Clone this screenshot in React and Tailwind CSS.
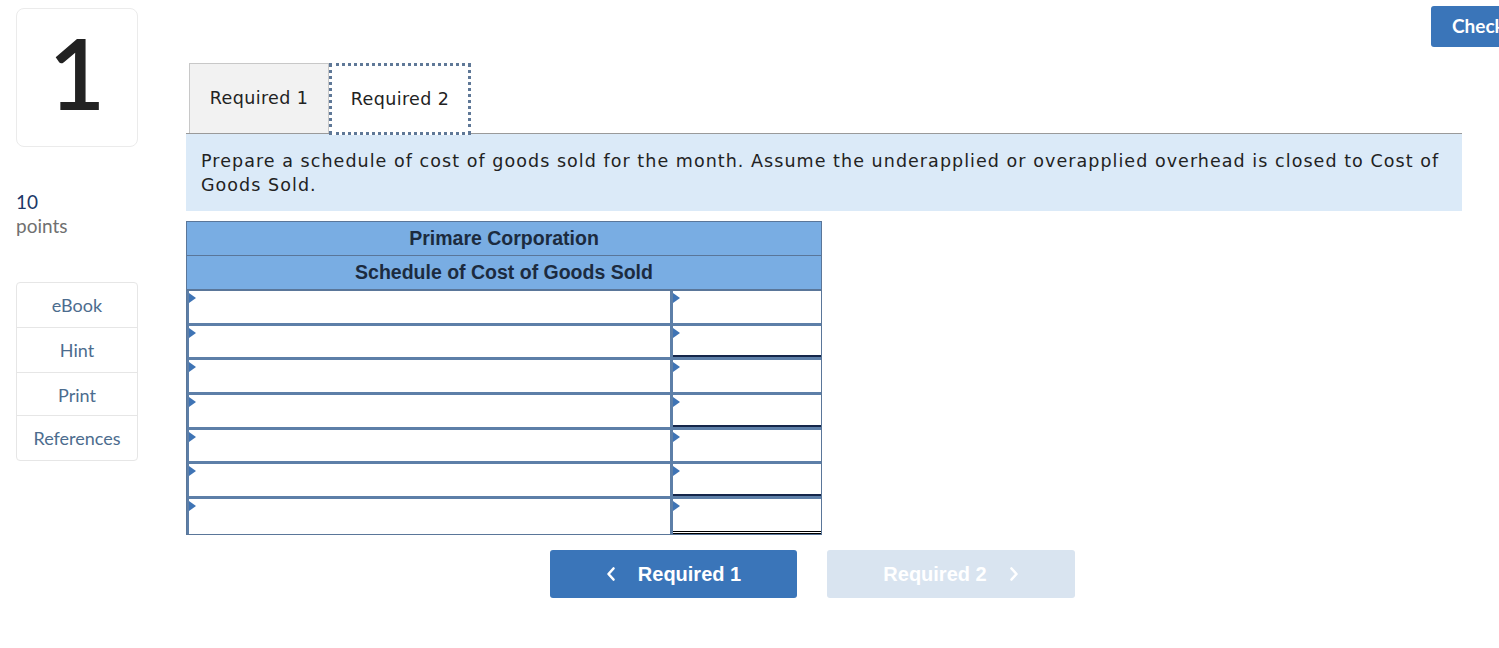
import React from "react";

const Tri = () => (
  <span className="absolute left-0 top-[2px] w-0 h-0 border-y-[5px] border-y-transparent border-l-[7px] border-l-[#3f74b5]" />
);

const rows = [
  { dark: false },
  { dark: true },
  { dark: false },
  { dark: true },
  { dark: false },
  { dark: true },
  { dark: false, dbl: true },
];

export default function App() {
  return (
    <div className="relative min-h-[648px] w-[1499px] overflow-hidden bg-white font-['Lato','Open_Sans',sans-serif]">
      <button className="absolute left-[1431px] top-[6px] h-[41px] w-[100px] rounded-[3px] bg-[#3a75b9] pl-[21px] text-left text-[19px] font-bold text-white">
        Check
      </button>
      <div className="flex pl-4 pt-2">
        <aside className="w-[122px] shrink-0">
          <div className="flex h-[139px] items-center justify-center rounded-[8px] border border-[#ebebeb] text-[98px] font-semibold leading-none text-[#222]">
            <span className="-mt-[12px]">1</span>
          </div>
          <div className="mt-[43px] text-[19px] leading-[24px] text-[#1d3767]">10</div>
          <div className="text-[19px] leading-[24px] text-[#707070]">points</div>
          <div className="mt-[44px] rounded-[4px] border border-[#e6e6e6] text-center text-[18px] text-[#4c6c8e]">
            <div className="flex h-[45px] items-center justify-center border-b border-[#e6e6e6]">eBook</div>
            <div className="flex h-[45px] items-center justify-center border-b border-[#e6e6e6]">Hint</div>
            <div className="flex h-[43px] items-center justify-center border-b border-[#e6e6e6] pt-[3px]">Print</div>
            <div className="flex h-[44px] items-center justify-center">References</div>
          </div>
        </aside>
        <main className="ml-[48px] w-[1276px] pt-[55px]">
          <div className="flex pl-[3px] font-['DejaVu_Sans',Verdana,sans-serif]">
            <div className="flex h-[70px] w-[140px] items-center justify-center border border-b-0 border-[#c8c8c8] bg-[#f2f2f2] text-[17.5px] tracking-[0.4px] text-[#222]">
              Required 1
            </div>
            <div className="relative z-10 -mb-[2px] flex h-[72px] w-[142px] items-center justify-center border-[3px] border-dotted border-[#5f7897] bg-white text-[17.5px] tracking-[0.4px] text-[#222]">
              Required 2
            </div>
          </div>
          <div className="border-t border-[#9a9a9a] bg-[#dbeaf8] px-[15px] pb-[14px] pt-[15px] font-['DejaVu_Sans',Verdana,sans-serif] text-[17.5px] leading-[24px] tracking-[1.05px] text-[#222]">
            Prepare a schedule of cost of goods sold for the month. Assume the underapplied or overapplied overhead is closed to Cost of Goods Sold.
          </div>
          <div className="mt-[10px] w-[636px] border border-[#5a7699] font-['Liberation_Sans',Arial,sans-serif]">
            <div className="flex h-[34px] items-center justify-center border-b border-[#5a7699] bg-[#79ade3] text-[19.5px] font-bold text-[#1c2b3f]">
              Primare Corporation
            </div>
            <div className="flex h-[35px] items-center justify-center border-b-[2px] border-[#5a7699] bg-[#79ade3] text-[19.5px] font-bold text-[#1c2b3f]">
              Schedule of Cost of Goods Sold
            </div>
            {rows.map((r, i) => (
              <div key={i} className={`flex h-[34.7px] ${i < rows.length - 1 ? "border-b-[3px] border-[#5d7fa8]" : ""}`}>
                <div className="relative w-[486px] border-l-[2px] border-r-[3px] border-[#5d7fa8] bg-white">
                  <Tri />
                </div>
                <div className={`relative flex-1 bg-white ${r.dark ? "border-b-2 border-[#15264a]" : ""} ${r.dbl ? "border-b-[3px] border-double border-black" : ""}`}>
                  <Tri />
                </div>
              </div>
            ))}
          </div>
          <div className="mt-[15px] flex pl-[364px] font-['Liberation_Sans',Arial,sans-serif]">
            <button className="flex h-[48px] w-[247px] items-center justify-center gap-[22px] rounded-[3px] bg-[#3a75b9] text-[20px] font-bold text-white">
              <svg width="10" height="16" viewBox="0 0 10 16" fill="none" stroke="white" strokeWidth="2.6" strokeLinecap="round" strokeLinejoin="round"><path d="M7.5 2.5 2.5 8l5 5.5" /></svg>
              Required 1
            </button>
            <button className="ml-[30px] flex h-[48px] w-[248px] items-center justify-center gap-[22px] rounded-[3px] bg-[#d9e4f0] text-[20px] font-bold text-white">
              Required 2
              <svg width="10" height="16" viewBox="0 0 10 16" fill="none" stroke="white" strokeWidth="2.6" strokeLinecap="round" strokeLinejoin="round"><path d="M2.5 2.5 7.5 8l-5 5.5" /></svg>
            </button>
          </div>
        </main>
      </div>
    </div>
  );
}
